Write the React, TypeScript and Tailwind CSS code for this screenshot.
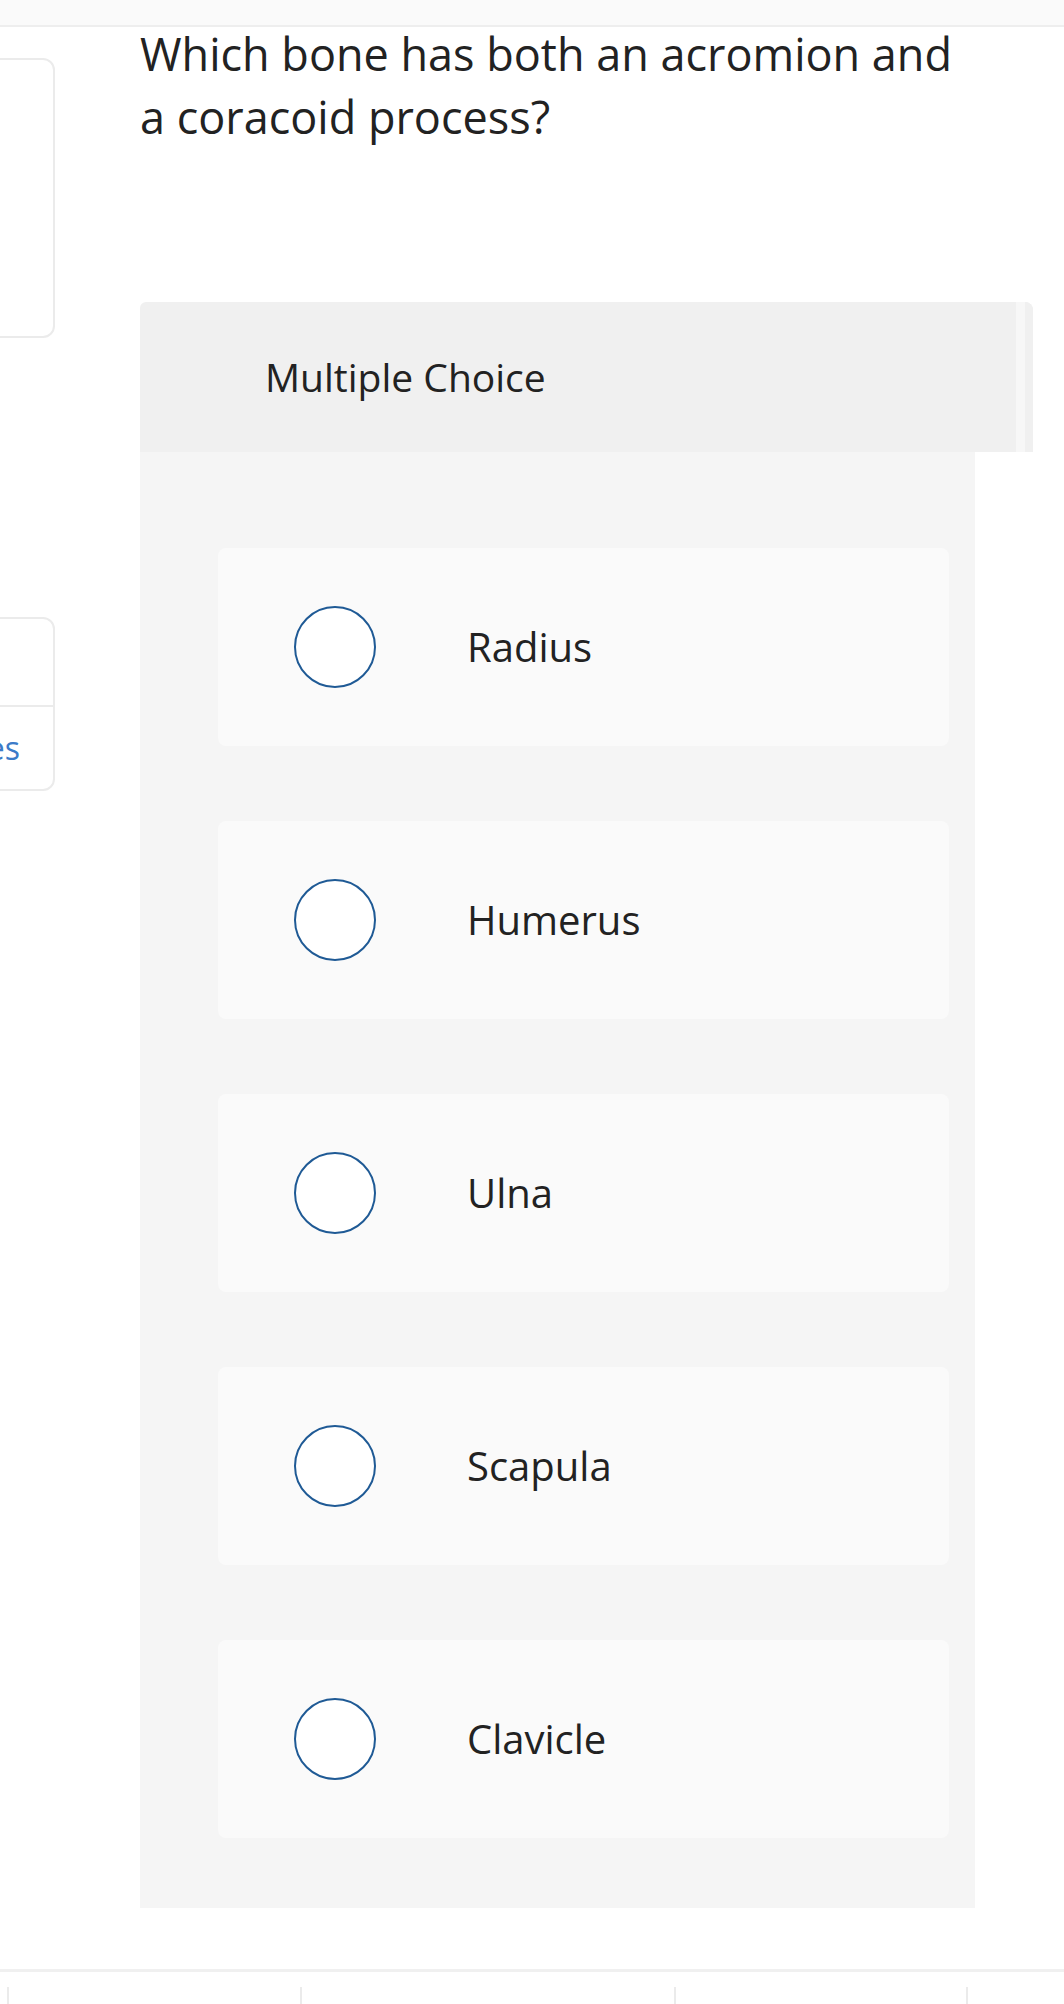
import React from 'react';

const options = ['Radius', 'Humerus', 'Ulna', 'Scapula', 'Clavicle'];

function Option({ label }: { label: string }) {
  return (
    <label className="ml-[78px] flex h-[198px] w-[731px] cursor-pointer items-center rounded-lg bg-[#fafafa]">
      <span className="ml-[76px] h-[82px] w-[82px] shrink-0 rounded-full border-[2.5px] border-[#1f5a95] bg-white" />
      <span className="ml-[91px] text-[40px] leading-none text-[#222]">{label}</span>
    </label>
  );
}

export default function App() {
  return (
    <div className="min-h-[2004px] bg-white font-['Open_Sans',sans-serif] text-[#222]">
      <div className="h-[27px] border-b-2 border-[#eeeeee] bg-[#fafafa]" />

      <div className="flex">
        {/* sidebar, mostly scrolled off to the left */}
        <aside className="w-[55px] shrink-0 overflow-hidden">
          <div className="ml-[-245px] w-[300px]">
            <div className="mt-[31px] h-[280px] rounded-xl border-2 border-[#ebebeb]" />
            <div className="mt-[279px] rounded-xl border-2 border-[#ebebeb]">
              <div className="h-[88px] border-b-2 border-[#ebebeb]" />
              <div className="flex h-[82px] items-center justify-end pr-[33px] text-[32px] text-[#3b7bc8]">
                Notes
              </div>
            </div>
          </div>
        </aside>

        <main className="ml-[85px] w-[893px]">
          <h2 className="mt-[-5px] text-[45px] leading-[63px] font-normal whitespace-nowrap">
            Which bone has both an acromion and
            <br />
            a coracoid process?
          </h2>

          <div className="mt-[154px] flex h-[150px] rounded-t-md rounded-tr-lg bg-[#f0f0f0]">
            <div className="flex flex-1 items-center pl-[125px] text-[39px]">Multiple Choice</div>
            <div className="w-[9px] bg-[#f7f7f7]" />
            <div className="w-[8px] rounded-tr-lg bg-[#f0f0f0]" />
          </div>

          <div className="flex w-[835px] flex-col gap-[75px] bg-[#f5f5f5] pt-[96px] pb-[70px]">
            {options.map((o) => (
              <Option key={o} label={o} />
            ))}
          </div>
        </main>
      </div>

      <nav className="mt-[61px] flex border-t-[3px] border-[#f0f0f0] pt-[15px]">
        <span className="ml-[7px] h-[17px] w-[2px] bg-[#ebebeb]" />
        <span className="ml-[291px] h-[17px] w-[2px] bg-[#ebebeb]" />
        <span className="ml-[372px] h-[17px] w-[2px] bg-[#ebebeb]" />
        <span className="ml-[290px] h-[17px] w-[2px] bg-[#ebebeb]" />
      </nav>
    </div>
  );
}
